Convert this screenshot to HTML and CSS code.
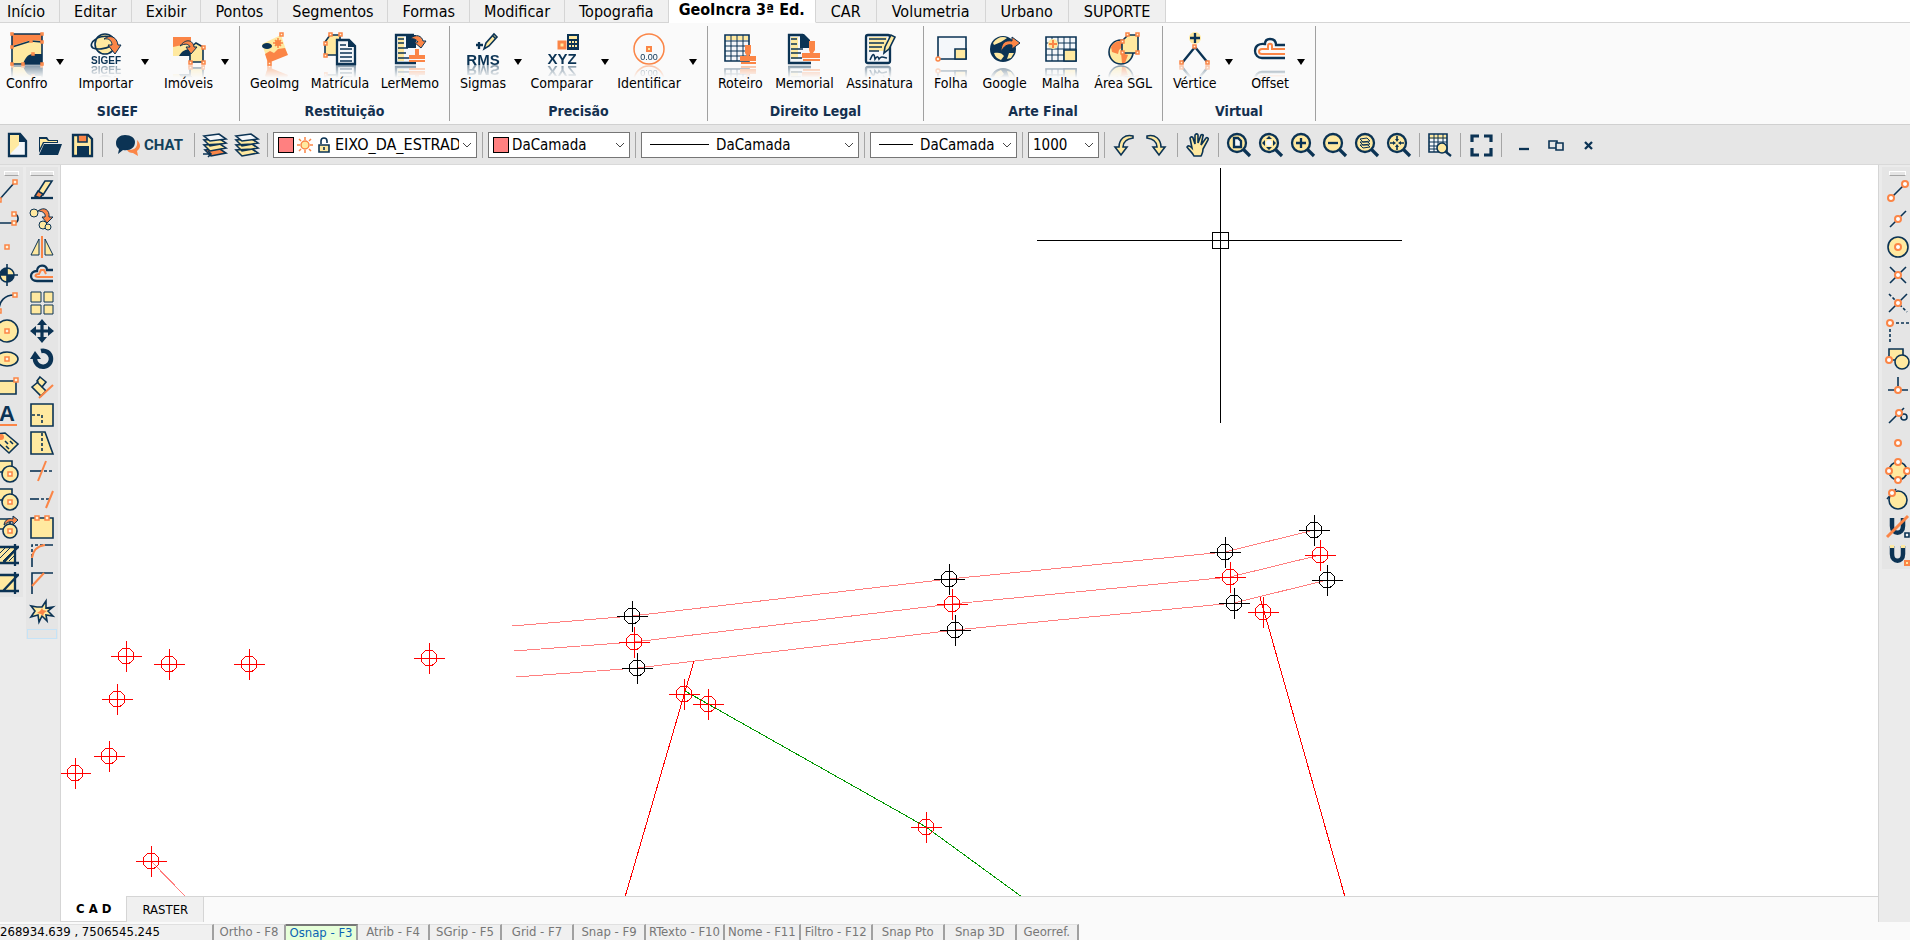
FILE: index.html
```html
<!DOCTYPE html>
<html lang="pt-BR">
  <head>
    <meta charset="UTF-8" />
    <meta name="viewport" content="width=device-width, initial-scale=1.0" />
    <title>GeoIncra 3ª Ed.</title>
    <link rel="stylesheet" href="styles.css">
  </head>
  <body>
    <nav class="tabs">
      <button class="tab">Início</button>
      <button class="tab">Editar</button>
      <button class="tab">Exibir</button>
      <button class="tab">Pontos</button>
      <button class="tab">Segmentos</button>
      <button class="tab">Formas</button>
      <button class="tab">Modificar</button>
      <button class="tab">Topografia</button>
      <button class="tab active">GeoIncra 3ª Ed.</button>
      <button class="tab">CAR</button>
      <button class="tab">Volumetria</button>
      <button class="tab">Urbano</button>
      <button class="tab">SUPORTE</button>
    </nav>

    <section class="ribbon">
      <div class="group">
        <div class="tools">
          <button class="tool drop">
            <svg viewBox="0 0 32 32"><path class="y" d="M1 1h30v30H1z"/><path class="o" d="M1 1h30v7l-11-1L1 13z"/><path class="n" d="M12 31c2-6 5-10 10-10h9v10z"/><path class="ln" d="M1 1h30v30H1zM1 14l19-6 11 1"/><path class="pt" d="M0 0h2v2H0zM30 0h2v2h-2zM0 13h2v2H0zM19 7h2v2h-2zM30 8h2v2h-2zM0 30h2v2H0zM11 30h2v2h-2zM21 20h2v2h-2zM30 30h2v2h-2z"/></svg>
            <span>Confro</span>
          </button>
          <button class="tool drop">
            <svg viewBox="0 0 32 32"><circle class="y ln" cx="15" cy="11" r="10"/><path class="ln" d="M6 6C1 9 0 13 3 15c4 2 12 1 18-2M7 5c5-2 12-2 17 0"/><path class="o ln1" d="M14 6c6-5 13-2 14 6h3l-6 9-7-9h4c0-4-3-7-8-6z"/><text x="16" y="31" class="svgtext" font-size="10" text-anchor="middle">SIGEF</text></svg>
            <span>Importar</span>
          </button>
          <button class="tool drop">
            <svg viewBox="0 0 32 32"><path class="y" d="M0 4h18v19H0z"/><path class="o" d="M0 4h18v6L0 14z"/><path class="n" d="M6 23c3-5 6-7 12-7v7z"/><path class="y ln" d="M18 14l5-4 7 4v15H17V18z"/><path class="o ln1" d="M7 13c6-8 13-6 14 1h3l-6 7-5-7h4c-1-3-5-4-10-1z"/><path class="pt" d="M29 13h3v3h-3zM29 28h3v3h-3zM16 28h3v3h-3z"/></svg>
            <span>Imóveis</span>
          </button>
        </div>
        <h2>SIGEF</h2>
      </div>
      <div class="group">
        <div class="tools">
          <button class="tool">
            <svg viewBox="0 0 32 32"><path class="y" d="M3 11l19-9 6 18L9 29z"/><path class="o" d="M6 21l5-3 4 2 4-4 7-1 3 7-20 8z"/><ellipse class="n" cx="8" cy="13" rx="5" ry="3"/><circle class="o" cx="19" cy="10" r="3"/><path class="lo1" d="M19 5v10M14 10h10M16 7l6 6M22 7l-6 6"/><path class="pt" d="M21 0h3v3h-3zM9 29h3v3H9z"/></svg>
            <span>GeoImg</span>
          </button>
          <button class="tool">
            <svg viewBox="0 0 32 32"><path class="y ln" d="M1 22V9l5-7h10v20z"/><path class="pt" d="M0 9h3v3H0zM5 0h3v3H5zM15 0h3v3h-3zM0 21h3v3H0z"/><path class="w ln2" d="M13 7h12l6 6v18H13z"/><path class="n" d="M24 6l8 8h-8z"/><path class="ln" d="M16 12h6M16 16h12M16 20h12M16 24h12M16 28h12"/></svg>
            <span>Matrícula</span>
          </button>
          <button class="tool">
            <svg viewBox="0 0 32 32"><path class="w ln2" d="M22 30H2V2h18"/><path class="y" d="M4 4h6v24H4z"/><path class="ln" d="M4 6h6M4 10h6M4 15h10M4 20h8M4 25h12"/><path class="n" d="M12 2h10v13H12z"/><path class="o ln1" d="M16 6c6-6 12-3 13 2h3l-5 7-7-6h4c-2-3-5-4-8-3z"/><path class="o" d="M21 16h4v6h6v4H15v-4h6zM15 27h16v2H15z"/></svg>
            <span>LerMemo</span>
          </button>
        </div>
        <h2>Restituição</h2>
      </div>
      <div class="group">
        <div class="tools">
          <button class="tool drop">
            <svg viewBox="0 0 32 32"><path class="y ln" d="M17 16l2-6 8-9 3 3-8 9zM26 3l3 3"/><path class="ln2" d="M9 12h7M12 9v7"/><text x="16" y="32" class="svgtext" font-size="15" text-anchor="middle">RMS</text></svg>
            <span>Sigmas</span>
          </button>
          <button class="tool drop">
            <svg viewBox="0 0 32 32"><path class="pto" d="M13 9h6v6h-6z"/><path class="n" d="M21 1h12v16H21z"/><path class="y" d="M23 3h8v3h-8zM23 8h2v2h-2zM26 8h2v2h-2zM29 8h2v2h-2zM23 12h2v2h-2zM26 12h2v2h-2zM29 12h2v2h-2z"/><text x="16" y="31" class="svgtext" font-size="15" text-anchor="middle">XYZ</text></svg>
            <span>Comparar</span>
          </button>
          <button class="tool drop">
            <svg viewBox="0 0 32 32"><circle class="lo1" cx="16" cy="16" r="15"/><path class="pt2" d="M14 14h4v4h-4z"/><text x="16" y="27" class="value" text-anchor="middle">0.00</text></svg>
            <span>Identificar</span>
          </button>
        </div>
        <h2>Precisão</h2>
      </div>
      <div class="group">
        <div class="tools">
          <button class="tool">
            <svg viewBox="0 0 32 32"><path class="w ln" d="M1 2h24v26H1z"/><path class="y" d="M2 3h22v4H2z"/><path class="lnt" d="M1 8h24M1 13h24M1 18h24M1 23h24M7 2v26M13 2v26M19 2v26"/><path class="o" d="M21 12h6v8l-2 3h7v5H16v-5h7l-2-3zM17 29h15v2H17z"/></svg>
            <span>Roteiro</span>
          </button>
          <button class="tool">
            <svg viewBox="0 0 32 32"><path class="w ln2" d="M23 30H1V2h14"/><path class="y" d="M3 4h7v22H3z"/><path class="n" d="M12 1h4l6 6v8H12z"/><path class="ln" d="M3 6h6M3 11h6M3 16h12M3 20h10M3 25h11"/><path class="o" d="M21 8h6v9l-2 3h7v5H14v-5h8l-1-3zM15 26h17v2H15z"/></svg>
            <span>Memorial</span>
          </button>
          <button class="tool">
            <svg viewBox="0 0 32 32"><rect class="w ln2" x="2" y="2" width="24" height="28" rx="2"/><path class="y" d="M5 4h18v14H5z"/><path class="ln" d="M5 6h17M5 10h15M5 14h13M5 18h10M6 27c3-7 4-7 5-1 2-3 3-3 4 0 2-3 4-2 8-1"/><path class="y ln" d="M20 20l1-6 6-12 4 2-6 12z"/></svg>
            <span>Assinatura</span>
          </button>
        </div>
        <h2>Direito Legal</h2>
      </div>
      <div class="group">
        <div class="tools">
          <button class="tool">
            <svg viewBox="0 0 32 32"><path class="w ln" d="M3 4h28v22H3z"/><path class="y ln" d="M20 16h11v10H20z"/><circle class="pt" cx="3" cy="26" r="2"/></svg>
            <span>Folha</span>
          </button>
          <button class="tool">
            <svg viewBox="0 0 32 32"><circle class="n" cx="14" cy="16" r="13"/><path class="y" d="M4 10c4-6 10-7 14-5l-6 4-7 3zM5 20c5-1 8 0 10 3l-3 4c-3-1-6-3-7-7zM20 20l5 0-3 5-4 1z"/><path class="o ln1" d="M12 19C12 9 17 7 23 8V4l8 6-8 6v-4c-5-1-8 1-11 7z"/></svg>
            <span>Google</span>
          </button>
          <button class="tool">
            <svg viewBox="0 0 32 32"><path class="w ln" d="M1 4h30v24H1z"/><path class="lnt" d="M7 4v24M13 4v24M19 4v24M25 4v24M1 10h30M1 16h30M1 22h30"/><circle class="y" cx="8" cy="11" r="5"/><path class="lo" d="M4 11h8M8 7v8"/><path class="y ln" d="M19 17h12v11H19z"/></svg>
            <span>Malha</span>
          </button>
          <button class="tool">
            <svg viewBox="0 0 32 32"><circle class="y ln" cx="14" cy="19" r="12"/><path class="o" d="M4 14c3-5 6-6 10-6l3 5-5 4-1 4-6-2zM14 20l7 2-3 8h-3z"/><path class="y ln" d="M15 8l6-6h10v18H15z"/><path class="pt" d="M14 7h3v3h-3zM19 0h3v3h-3zM29 0h3v3h-3zM29 18h3v3h-3zM14 18h3v3h-3z"/></svg>
            <span>Área SGL</span>
          </button>
        </div>
        <h2>Arte Final</h2>
      </div>
      <div class="group">
        <div class="tools">
          <button class="tool drop">
            <svg viewBox="0 0 32 32"><circle class="y" cx="16" cy="5" r="6"/><path class="ln2" d="M16 0v10M11 5h10M16 14L3 30M16 14l13 16"/><path class="pt" d="M14 12h3v3h-3zM1 28h3v3H1zM27 28h3v3h-3z"/></svg>
            <span>Vértice</span>
          </button>
          <button class="tool drop">
            <svg viewBox="0 0 32 32"><path class="ln2" d="M31 12h-9c0-4-2-6-6-6s-5 2-5 5C5 10 1 13 1 18c0 4 3 7 7 7h23"/><path class="lo" d="M31 16H18v-3c0-3-4-3-4 0v3H8c-4 0-4 5 0 5h23"/></svg>
            <span>Offset</span>
          </button>
        </div>
        <h2>Virtual</h2>
      </div>
    </section>

    <section class="toolbar">
      <div class="set">
        <button class="icon" aria-label="Novo"><svg viewBox="0 0 24 24"><path class="w ln2" d="M3 1h11l6 7v15H3z"/><path class="y" d="M4 2h9v10l-9 9z"/><path class="n" d="M13 1l8 8h-8z"/></svg></button>
        <button class="icon" aria-label="Abrir"><svg viewBox="0 0 24 24"><path class="n" d="M1 4h8l2 3h9v3H6L1 20zM6 11h18l-4 11H1z"/><path class="y" d="M2 6h6l2 2h9v1H5l-3 6z"/></svg></button>
        <button class="icon" aria-label="Salvar"><svg viewBox="0 0 24 24"><path class="y ln2" d="M3 2h15l4 4v17H3z"/><path class="o ln" d="M8 2h9v7H8z"/><path class="n" d="M7 13h12v9H7z"/></svg></button>
      </div>
      <div class="set">
        <button class="chat"><svg viewBox="0 0 24 24"><path class="o" d="M13 17c7 0 9-4 8-10 4 4 4 8 0 11l1 5-5-3c-3 0-5-1-6-3z"/><path class="n" d="M9 2C4 2 0 5 0 10c0 3 1 4 3 6l-1 5 5-4c7 1 12-2 12-8 0-4-4-7-10-7z"/></svg>CHAT</button>
      </div>
      <div class="set">
        <button class="icon" aria-label="Camada atual"><svg viewBox="0 0 24 24"><path class="o ln" d="M2 17l6 6 15-3-6-4z"/><path class="y ln" d="M1 12l6 6 16-3-6-4zM1 7l6 6 16-3-6-4z"/><path class="w ln" d="M1 3l15-2 7 5-16 2z"/><path class="ln" d="M0 21h8M5 18l3 3-3 3"/></svg></button>
        <button class="icon" aria-label="Camadas"><svg viewBox="0 0 24 24"><path class="y ln" d="M1 17l6 6 16-3-6-4zM1 12l6 6 16-3-6-4zM1 7l6 6 16-3-6-4z"/><path class="w ln" d="M1 3l15-2 7 5-16 2z"/></svg></button>
      </div>
      <div class="set narrow">
        <div class="combo wide">
          <i class="swatch"></i>
          <svg class="mini" viewBox="0 0 16 16"><circle class="y lo1" cx="8" cy="8" r="4"/><path class="lo1" d="M8 0v3M8 13v3M0 8h3M13 8h3M2 2l2 2M12 12l2 2M14 2l-2 2M4 12l-2 2"/></svg>
          <svg class="mini" viewBox="0 0 16 16"><path class="ln" d="M5 7V4c0-4 6-4 6 0v2"/><path class="y ln" d="M3 8h10v7H3z"/><path class="ln" d="M8 10v3"/></svg>
          <select aria-label="Camada"><option>EIXO_DA_ESTRADA</option></select>
          <svg class="chev" viewBox="0 0 10 10"><path d="M1 3l4 4 4-4"/></svg>
        </div>
      </div>
      <div class="set narrow">
        <div class="combo color">
          <i class="swatch"></i>
          <select aria-label="Cor"><option>DaCamada</option></select>
          <svg class="chev" viewBox="0 0 10 10"><path d="M1 3l4 4 4-4"/></svg>
        </div>
      </div>
      <div class="set narrow">
        <div class="combo ltype">
          <i class="line long"></i>
          <select aria-label="Tipo de linha"><option>DaCamada</option></select>
          <svg class="chev" viewBox="0 0 10 10"><path d="M1 3l4 4 4-4"/></svg>
        </div>
      </div>
      <div class="set narrow">
        <div class="combo lweight">
          <i class="line"></i>
          <select aria-label="Espessura"><option>DaCamada</option></select>
          <svg class="chev" viewBox="0 0 10 10"><path d="M1 3l4 4 4-4"/></svg>
        </div>
      </div>
      <div class="set narrow">
        <div class="combo scale">
          <select aria-label="Escala"><option>1000</option></select>
          <svg class="chev" viewBox="0 0 10 10"><path d="M1 3l4 4 4-4"/></svg>
        </div>
      </div>
      <div class="set">
        <button class="icon" aria-label="Desfazer"><svg viewBox="0 0 24 24"><path class="y ln" d="M20 3C12 1 6 6 6 14H2l6 8 6-8h-4c0-5 3-8 10-9z"/></svg></button>
        <button class="icon" aria-label="Refazer"><svg viewBox="0 0 24 24"><path class="y ln" d="M2 3c8-2 14 3 14 11h4l-6 8-6-8h4c0-5-3-8-10-9z"/></svg></button>
      </div>
      <div class="set">
        <button class="icon" aria-label="Mover vista"><svg viewBox="0 0 24 24"><path class="y ln" d="M8 23C6 19 3 17 1 14c1-2 3-1 5 1L4 5c1-2 3-1 3 0l2 6V2c1-2 3-1 3 0v8l3-8c1-1 3 0 2 1l-2 9 5-7c1-1 3 0 2 2l-5 9c0 4-1 5-2 7z"/></svg></button>
      </div>
      <div class="set">
        <button class="icon" aria-label="Zoom página"><svg viewBox="0 0 24 24"><circle class="y ln2" cx="10" cy="10" r="9"/><path class="ln3" d="M16 16l7 7"/><path class="w ln2" d="M7 5h4l3 3v6H7z"/></svg></button>
        <button class="icon" aria-label="Zoom extensão"><svg viewBox="0 0 24 24"><circle class="y ln2" cx="10" cy="10" r="9"/><path class="ln3" d="M16 16l7 7"/><circle class="w" cx="10" cy="10" r="3"/><path class="n" d="M10 3l3 3H7zM10 17l3-3H7zM3 10l3-3v6zM17 10l-3-3v6z"/></svg></button>
        <button class="icon" aria-label="Mais zoom"><svg viewBox="0 0 24 24"><circle class="y ln2" cx="10" cy="10" r="9"/><path class="ln3" d="M16 16l7 7"/><path class="ln2" d="M5 10h10M10 5v10"/></svg></button>
        <button class="icon" aria-label="Menos zoom"><svg viewBox="0 0 24 24"><circle class="y ln2" cx="10" cy="10" r="9"/><path class="ln3" d="M16 16l7 7"/><path class="ln2" d="M5 10h10"/></svg></button>
        <button class="icon" aria-label="Zoom camada"><svg viewBox="0 0 24 24"><circle class="y ln2" cx="10" cy="10" r="9"/><path class="ln3" d="M16 16l7 7"/><path class="y lnt" d="M5 12l3 3 7-1-2-2zM5 9l3 3 7-1-2-2zM5 6l3 3 7-1-3-3z"/></svg></button>
        <button class="icon" aria-label="Zoom centro"><svg viewBox="0 0 24 24"><circle class="y ln2" cx="10" cy="10" r="9"/><path class="ln3" d="M16 16l7 7"/><path class="ln" d="M10 3v4M10 13v4M3 10h4M13 10h4"/><path class="n" d="M10 9L8 6h4zM10 11l-2 3h4zM9 10L6 8v4zM11 10l3-2v4z"/></svg></button>
      </div>
      <div class="set">
        <button class="icon" aria-label="Tabela"><svg viewBox="0 0 24 24"><path class="w ln" d="M1 1h18v18H1z"/><path class="y" d="M2 2h16v4H2z"/><path class="lnt" d="M1 5h18M1 9h18M1 13h18M1 16h18M6 1v18M10 1v18M15 1v18"/><circle class="y ln" cx="14" cy="15" r="5"/><path class="ln2" d="M18 19l5 4"/></svg></button>
      </div>
      <div class="set">
        <button class="icon" aria-label="Tela cheia"><svg viewBox="0 0 24 24"><path class="ln3" d="M3 9V3h7M15 3h7v6M22 15v7h-7M10 22H3v-7"/></svg></button>
      </div>
      <div class="set windows">
        <button class="icon" aria-label="Minimizar"><svg viewBox="0 0 24 24"><path class="ln2" d="M7 16h10"/></svg></button>
        <button class="icon" aria-label="Restaurar"><svg viewBox="0 0 24 24"><path class="ln" d="M12 15H5V8h8v2M12 10h7v7h-7z"/></svg></button>
        <button class="icon" aria-label="Fechar"><svg viewBox="0 0 24 24"><path class="ln2" d="M9 9l7 7M16 9l-7 7"/></svg></button>
      </div>
    </section>

    <main>
      <aside class="side left">
        <div class="column cut">
          <button aria-label="Linha"><svg viewBox="0 0 24 24"><path class="ln" d="M4 21L20 3"/><path class="pt" d="M18 1h4v4h-4zM2 19h4v4H2z"/></svg></button>
          <button aria-label="Polilinha"><svg viewBox="0 0 24 24"><path class="ln" d="M2 16h17c6-1 5-10-1-9"/><path class="pt" d="M17 5h4v4h-4zM17 14h4v4h-4z"/></svg></button>
          <button aria-label="Ponto"><svg viewBox="0 0 24 24"><path class="pt" d="M10 10h4v4h-4z"/></svg></button>
          <button aria-label="Marco"><svg viewBox="0 0 24 24"><circle class="y ln" cx="12" cy="12" r="7"/><path class="n" d="M12 5a7 7 0 0 0-7 7h7zM12 19a7 7 0 0 0 7-7h-7z"/><path class="ln" d="M12 1v22M1 12h22"/></svg></button>
          <button aria-label="Arco"><svg viewBox="0 0 24 24"><path class="ln" d="M4 19C4 10 10 4 19 4"/><path class="pt" d="M18 2h4v4h-4zM2 18h4v4H2z"/></svg></button>
          <button aria-label="Círculo"><svg viewBox="0 0 24 24"><circle class="y ln" cx="12" cy="12" r="11"/><path class="pt" d="M10 10h4v4h-4z"/></svg></button>
          <button aria-label="Elipse"><svg viewBox="0 0 24 24"><ellipse class="y ln" cx="12" cy="12" rx="11" ry="7"/><path class="pt" d="M10 10h4v4h-4z"/></svg></button>
          <button aria-label="Retângulo"><svg viewBox="0 0 24 24"><path class="y ln" d="M2 6h19v13H2z"/><path class="pt" d="M19 3h4v4h-4z"/></svg></button>
          <button aria-label="Texto"><svg viewBox="0 0 24 24"><text x="12" y="18" class="svgtext" font-size="22" text-anchor="middle">A</text><path class="lo" d="M2 22h20"/></svg></button>
          <button aria-label="Etiqueta"><svg viewBox="0 0 24 24"><path class="y ln" d="M2 3l8-1 13 11-9 9L2 11z"/><circle class="o" cx="6" cy="6" r="3"/><path class="ln" d="M10 10l3 3M15 10l3 3M11 15l3 3"/></svg></button>
          <button aria-label="Bloco"><svg viewBox="0 0 24 24"><path class="y ln" d="M1 2h16v11H1z"/><circle class="y ln" cx="15" cy="15" r="8"/><path class="pt" d="M13 13h4v4h-4z"/></svg></button>
          <button aria-label="Inserir bloco"><svg viewBox="0 0 24 24"><path class="y ln" d="M1 2h16v11H1z"/><circle class="y ln" cx="15" cy="15" r="8"/><path class="pt" d="M13 13h4v4h-4z"/></svg></button>
          <button aria-label="Exportar bloco"><svg viewBox="0 0 24 24"><path class="y ln" d="M1 4h14v10H1z"/><circle class="y ln" cx="15" cy="16" r="7"/><path class="o ln1" d="M9 10c1-6 5-7 9-6V1l5 4-5 5V7c-3-1-5 0-9 3z"/><path class="pt" d="M13 14h4v4h-4z"/></svg></button>
          <button aria-label="Hachura"><svg viewBox="0 0 24 24"><path class="y" d="M3 4h17v16H3z"/><path class="ln1" d="M3 12l7-7M3 17L15 5M8 18L19 7M14 18l5-5"/><path class="ln2" d="M2 4h22M2 20h22M20 1v22M23 4L8 20"/></svg></button>
          <button aria-label="Contorno"><svg viewBox="0 0 24 24"><path class="y" d="M2 4h18v16H2z"/><path class="ln2" d="M2 4h22M2 20h22M20 1v22M23 4L8 20"/></svg></button>
        </div>
        <div class="column">
          <button aria-label="Apagar"><svg viewBox="0 0 24 24"><path class="y ln" d="M8 13l7-11h7l-9 14z"/><path class="o ln" d="M5 17l3-5 5 3-3 4z"/><path class="ln2" d="M1 19h22"/></svg></button>
          <button aria-label="Copiar"><svg viewBox="0 0 24 24"><circle class="y ln1" cx="4" cy="6" r="4"/><circle class="y ln1" cx="13" cy="18" r="4"/><circle class="y ln1" cx="18" cy="20" r="3"/><path class="o ln1" d="M8 4c6-5 12-1 11 6h4l-6 6-5-6h3c1-3-2-6-7-6z"/></svg></button>
          <button aria-label="Espelhar"><svg viewBox="0 0 24 24"><path class="y ln1" d="M9 4v16H1zM15 4v16h8z"/><path class="lo" d="M12 1v22"/></svg></button>
          <button aria-label="Paralela"><svg viewBox="0 0 24 24"><path class="ln2" d="M23 7h-6c0-6-10-6-10 1-8 0-8 10 0 10h16"/><path class="lo" d="M23 14H8c-4 0-3-3 1-3l2-4h3l2 4"/></svg></button>
          <button aria-label="Matriz"><svg viewBox="0 0 24 24"><path class="y ln1" d="M1 1h10v10H1zM14 1h9v10h-9zM1 14h10v9H1zM14 14h9v9h-9z"/></svg></button>
          <button aria-label="Mover"><svg viewBox="0 0 24 24"><path class="ln3" d="M12 3v18M3 12h18"/><path class="n" d="M12 0l5 6H7zM12 24l5-6H7zM0 12l6-5v10zM24 12l-6-5v10z"/></svg></button>
          <button aria-label="Girar"><svg viewBox="0 0 24 24"><path class="ln4" d="M11 4a8 8 0 1 1-6 8"/><path class="n" d="M0 12l5-8 6 8z"/></svg></button>
          <button aria-label="Alinhar"><svg viewBox="0 0 24 24"><path class="y ln" d="M10 2l6 5-4 5 4 4-5 5-9-9 6-5-1-1z"/><path class="ln" d="M7 7l5 5"/><path class="lo" d="M9 23L23 10"/></svg></button>
          <button aria-label="Escala"><svg viewBox="0 0 24 24"><path class="y ln" d="M1 1h22v22H1z"/><path class="ln dash" d="M2 12h10v10"/></svg></button>
          <button aria-label="Esticar"><svg viewBox="0 0 24 24"><path class="y ln" d="M1 1h14l8 22H1z"/><path class="ln dash" d="M12 2v20"/></svg></button>
          <button aria-label="Aparar"><svg viewBox="0 0 24 24"><path class="ln" d="M0 12h12"/><path class="ln dash" d="M14 12h10"/><path class="lo" d="M8 22l8-20"/></svg></button>
          <button aria-label="Estender"><svg viewBox="0 0 24 24"><path class="ln" d="M0 12h9"/><path class="ln dash" d="M11 12h8"/><path class="lo" d="M16 21l7-17"/></svg></button>
          <button aria-label="Quebrar"><svg viewBox="0 0 24 24"><path class="y ln" d="M1 3h22v20H1z"/><path class="pt" d="M5 1h4v4H5zM15 1h4v4h-4z"/></svg></button>
          <button aria-label="Concordar"><svg viewBox="0 0 24 24"><path class="ln dash" d="M2 14V2h12"/><path class="ln" d="M2 15v9M15 2h8"/><path class="lo" d="M2 15C3 7 7 3 15 2"/></svg></button>
          <button aria-label="Chanfrar"><svg viewBox="0 0 24 24"><path class="ln" d="M2 23V2h21"/><path class="lo" d="M2 15L14 2"/></svg></button>
          <button aria-label="Explodir"><svg viewBox="0 0 24 24"><path class="y ln" d="M12 8l4-6 0 7 7-1-5 4 5 5-7-1 1 6-5-5-3 6-1-7-7 2 4-6-4-5 6 1z"/><path class="o" d="M12 9l1 2 4 1-3 2-1 3-2-2-4-1 3-2z"/></svg></button>
          <span class="slot"></span>
        </div>
      </aside>

      <div class="workspace">
        <div class="canvas">
          <svg>
            <defs>
              <g id="mark"><circle r="8"/><path d="M-15 0h31M0-15v31"/></g>
            </defs>
            <!-- drawing units are window pixels -->
            <g transform="translate(-61 -165)">
              <g class="road">
                <path d="M512 626L632 616 949 579 1225 552 1314 530"/>
                <path d="M514 651L634 642 952 604 1230 577 1320 555"/>
                <path d="M516 677L637 668 955 630 1234 603 1327 580"/>
                <path d="M151 861L185 896"/>
              </g>
              <g class="border">
                <path d="M694 661L625 897"/>
                <path d="M1260 597L1345 897"/>
              </g>
              <path class="fence" d="M685 691L708 704 926 827 1022 897"/>
              <g class="marks">
                <use href="#mark" x="632" y="616"/>
                <use href="#mark" x="637" y="668"/>
                <use href="#mark" x="949" y="579"/>
                <use href="#mark" x="955" y="630"/>
                <use href="#mark" x="1225" y="552"/>
                <use href="#mark" x="1234" y="603"/>
                <use href="#mark" x="1314" y="530"/>
                <use href="#mark" x="1327" y="580"/>
              </g>
              <g class="marks red">
                <use href="#mark" x="634" y="642"/>
                <use href="#mark" x="952" y="604"/>
                <use href="#mark" x="1230" y="577"/>
                <use href="#mark" x="1320" y="555"/>
                <use href="#mark" x="1263" y="612"/>
                <use href="#mark" x="684" y="694"/>
                <use href="#mark" x="708" y="704"/>
                <use href="#mark" x="926" y="827"/>
                <use href="#mark" x="126" y="656"/>
                <use href="#mark" x="169" y="664"/>
                <use href="#mark" x="249" y="664"/>
                <use href="#mark" x="429" y="658"/>
                <use href="#mark" x="117" y="699"/>
                <use href="#mark" x="109" y="756"/>
                <use href="#mark" x="75" y="773"/>
                <use href="#mark" x="151" y="861"/>
              </g>
              <path class="cursor" d="M1220 168V423M1037 240H1402M1212 232h16v16h-16z"/>
            </g>
          </svg>
        </div>
        <div class="views">
          <button class="view current">C A D</button>
          <button class="view">RASTER</button>
        </div>
      </div>

      <aside class="side right">
        <div class="column">
          <button aria-label="Extremidade"><svg viewBox="0 0 24 24"><path class="ln" d="M5 19L19 5"/><circle class="ring" cx="5" cy="19" r="3"/><circle class="ring" cx="19" cy="5" r="3"/></svg></button>
          <button aria-label="Ponto médio"><svg viewBox="0 0 24 24"><path class="ln" d="M4 20L20 4"/><circle class="ring" cx="12" cy="12" r="3"/></svg></button>
          <button aria-label="Centro"><svg viewBox="0 0 24 24"><circle class="y ln" cx="12" cy="12" r="10"/><circle class="ring" cx="12" cy="12" r="3"/></svg></button>
          <button aria-label="Interseção"><svg viewBox="0 0 24 24"><path class="ln" d="M4 4l16 16M20 4L4 20"/><circle class="ring" cx="12" cy="12" r="3"/></svg></button>
          <button aria-label="Interseção aparente"><svg viewBox="0 0 24 24"><path class="ln" d="M21 3L3 21"/><path class="ln dash" d="M3 3l18 18"/><circle class="ring" cx="12" cy="12" r="3"/></svg></button>
          <button aria-label="Extensão"><svg viewBox="0 0 24 24"><path class="ln dash" d="M4 23V4h20"/><circle class="ring" cx="4" cy="4" r="3"/></svg></button>
          <button aria-label="Inserção"><svg viewBox="0 0 24 24"><path class="y ln" d="M3 2h14v11H3z"/><circle class="y ln" cx="16" cy="15" r="7"/><circle class="ring" cx="3" cy="13" r="3"/></svg></button>
          <button aria-label="Perpendicular"><svg viewBox="0 0 24 24"><path class="ln" d="M2 15h20M12 2v13"/><circle class="ring" cx="12" cy="15" r="3"/></svg></button>
          <button aria-label="Tangente"><svg viewBox="0 0 24 24"><path class="ln" d="M3 20L18 5"/><circle class="ln" cx="18" cy="14" r="3"/><circle class="ring" cx="13" cy="10" r="3"/></svg></button>
          <button aria-label="Nó"><svg viewBox="0 0 24 24"><circle class="ring" cx="12" cy="12" r="3"/></svg></button>
          <button aria-label="Quadrante"><svg viewBox="0 0 24 24"><circle class="y ln" cx="12" cy="12" r="9"/><circle class="ring" cx="12" cy="3" r="3"/><circle class="ring" cx="12" cy="21" r="3"/><circle class="ring" cx="3" cy="12" r="3"/><circle class="ring" cx="21" cy="12" r="3"/></svg></button>
          <button aria-label="Próximo"><svg viewBox="0 0 24 24"><circle class="y ln" cx="12" cy="13" r="9"/><path class="ln" d="M1 12l9-10"/><circle class="ring" cx="6" cy="6" r="3"/></svg></button>
          <button aria-label="Desligar snap"><svg viewBox="0 0 24 24"><path class="ln4" d="M6 3v8c0 9 11 9 11 0V3"/><path class="w ln" d="M19 18h4v4h-4z"/><path class="lo3" d="M1 22L22 1"/></svg></button>
          <button aria-label="Ligar snap"><svg viewBox="0 0 24 24"><path class="ln4" d="M6 3v8c0 9 11 9 11 0V3"/><path class="y" d="M4 2h4v3H4zM15 2h4v3h-4z"/><path class="pt2" d="M19 18h4v4h-4z"/></svg></button>
        </div>
      </aside>
    </main>

    <footer class="status">
      <output class="coords">268934.639 , 7506545.245</output>
      <button>Ortho - F8</button>
      <button class="on">Osnap - F3</button>
      <button>Atrib - F4</button>
      <button>SGrip - F5</button>
      <button>Grid - F7</button>
      <button>Snap - F9</button>
      <button>RTexto - F10</button>
      <button>Nome - F11</button>
      <button>Filtro - F12</button>
      <button>Snap Pto</button>
      <button>Snap 3D</button>
      <button>Georref.</button>
    </footer>
  </body>
</html>
```
FILE: styles.css
```css
* {
  box-sizing: border-box;
}

body {
  margin: 0;
  height: 100vh;
  display: flex;
  flex-direction: column;
  overflow: hidden;
  background: #ebebeb;
  color: #000;
  font-family: "DejaVu Sans Condensed", "Noto Sans", sans-serif;
  font-size: 15px;
}

button {
  margin: 0;
  padding: 0;
  border: 0;
  background: none;
  color: inherit;
  font: inherit;
  white-space: nowrap;
}

svg {
  display: block;
  overflow: visible;
}

/* icon paint */
svg path,
svg circle,
svg ellipse,
svg rect {
  fill: none;
}

svg .y { fill: #ffe9a0; }
svg .o { fill: #fb8546; }
svg .n { fill: #0b3354; }
svg .w { fill: #f4f7fa; }
svg .ln1, svg .ln, svg .ln2, svg .ln3, svg .ln4, svg .lnt { stroke: #0b3354; }
svg .lnt { stroke-width: 1; }
svg .ln1 { stroke-width: 1; }
svg .ln { stroke-width: 1.6; }
svg .ln2 { stroke-width: 2.3; }
svg .ln3 { stroke-width: 3.2; }
svg .ln4 { stroke-width: 4.5; }
svg .lo, svg .lo1, svg .lo3 { stroke: #fb8546; stroke-width: 2; }
svg .lo1 { stroke-width: 1.5; }
svg .lo3 { stroke-width: 3; }
svg .dash { stroke-dasharray: 3 2; }
svg .pt { fill: #fff3dc; stroke: #fb8546; stroke-width: 1.5; }
svg .pt2 { fill: #ffe9a0; stroke: #fb8546; stroke-width: 2; }
svg .pto { fill: #ffe9a0; stroke: #fb8546; stroke-width: 3; }
svg .ring { fill: #fff; stroke: #fb8546; stroke-width: 2; }

.svgtext {
  fill: #0b3354;
  font-family: "Liberation Sans", sans-serif;
  font-weight: bold;
}

.value {
  fill: #0b3354;
  font-family: "Liberation Sans", sans-serif;
  font-size: 9px;
}

/* menu tabs */
.tabs {
  display: flex;
  flex: none;
  height: 23px;
  background: linear-gradient(#fff 22px, #d5d5d5 22px);
  font-size: 16px;
}

.tab {
  padding: 0 14px;
  border-right: 1px solid #d5d5d5;
  border-bottom: 1px solid #d5d5d5;
  background: #f0f0f0;
}

.tab:first-child {
  padding-left: 7px;
}

.tab.active {
  padding: 0 10px 4px;
  border-bottom-color: #fff;
  background: #fff;
  font-weight: bold;
}

.active ~ .tab {
  padding: 0 15px;
}

/* ribbon */
.ribbon {
  display: grid;
  grid-template-columns: 240px 210px 258px 216px 239px 153px;
  flex: none;
  padding: 3px 0;
  background: #fafafa;
  border-bottom: 1px solid #d0d0d0;
}

.group {
  height: 95px;
  padding: 0 10px;
  border-right: 1px solid #a0a0a0;
}

.group:first-child {
  padding-left: 6px;
}

.tools {
  display: flex;
  justify-content: space-between;
  height: 75px;
  padding-top: 7px;
}

.tool {
  display: grid;
  grid-template-columns: auto;
  grid-template-rows: 32px 28px;
  align-items: center;
  justify-items: center;
  font-size: 14px;
}

.tool svg {
  width: 32px;
  height: 32px;
  -webkit-box-reflect: below 0 linear-gradient(transparent 60%, rgba(0, 0, 0, 0.5));
}

.tool span {
  padding-top: 8px;
}

.drop {
  grid-template-columns: auto 16px;
}

.drop::after {
  grid-column: 2;
  grid-row: 1;
  align-self: end;
  justify-self: end;
  content: "";
  border: 4px solid transparent;
  border-top: 6px solid #000;
  border-bottom: 0;
}

.group h2 {
  margin: 0;
  color: #14304f;
  font-size: 14px;
  line-height: 20px;
  text-align: center;
}

/* drawing toolbar */
.toolbar {
  display: flex;
  flex: none;
  align-items: center;
  height: 40px;
  border-bottom: 1px solid #d9d9d9;
  background: #e6e6e6;
}

.set {
  display: flex;
  gap: 8px;
  padding: 0 8px;
  border-right: 1px solid #a5a5a5;
}

.set:first-child {
  padding-left: 6px;
}

.set:last-child {
  padding-left: 10px;
  border: 0;
}

.set.narrow {
  padding: 0 5px;
}

.icon svg,
.chat svg {
  width: 24px;
  height: 24px;
}

.chat {
  display: flex;
  align-items: center;
  gap: 4px;
  padding: 0 3px 0 5px;
  color: #12405a;
  font: bold 15px Roboto, sans-serif;
}

.combo {
  display: flex;
  align-items: center;
  gap: 3px;
  height: 26px;
  padding: 0 4px;
  border: 1px solid #767676;
  background: #fff;
}

.wide {
  width: 204px;
  font-size: 16px;
}

.color { width: 142px; }
.ltype { width: 218px; }
.lweight { width: 147px; }
.scale { width: 71px; }

.combo select {
  flex: 1;
  min-width: 0;
  padding: 0;
  border: 0;
  appearance: none;
  background: none;
  color: #000;
  font: inherit;
}

.swatch {
  flex: none;
  width: 16px;
  height: 16px;
  border: 1px solid #000;
  background: #ff8080;
}

.mini {
  flex: none;
  width: 16px;
  height: 16px;
}

.line {
  flex: none;
  width: 34px;
  height: 1px;
  margin: 0 4px;
  background: #000;
}

.line.long {
  width: 59px;
}

.chev {
  flex: none;
  width: 10px;
  height: 10px;
}

.chev path {
  stroke: #444;
}

/* side bars and canvas */
main {
  display: flex;
  flex: 1;
  min-height: 0;
}

.side {
  display: flex;
  flex: none;
  align-items: flex-start;
  padding-top: 2px;
}

.left {
  gap: 3px;
  padding-right: 2px;
}

.right {
  padding-left: 3px;
}

.column {
  display: flex;
  flex-direction: column;
  width: 32px;
  overflow: hidden;
  background: #e5e5e5;
}

.column::before {
  content: "";
  height: 3px;
  margin: 4px 4px 1px;
  border: 1px solid #fff;
  border-bottom-color: #a5a5a5;
}

.column button {
  display: flex;
  justify-content: center;
  align-items: center;
  height: 28px;
}

.column svg {
  flex: none;
  width: 24px;
  height: 24px;
}

.cut {
  width: 23px;
}

.cut button {
  justify-content: flex-end;
  padding-right: 4px;
}

.right .column {
  width: 28px;
  padding-left: 3px;
}

.slot {
  height: 10px;
  margin: 4px 1px 0;
  border: 1px solid #c5e3f7;
}

.workspace {
  display: flex;
  flex: 1;
  flex-direction: column;
  min-width: 0;
  border-right: 1px solid #d5d5d5;
  border-left: 1px solid #d5d5d5;
  background: #fafafa;
}

.canvas {
  flex: 1;
  min-height: 0;
  overflow: hidden;
  background: #fff;
}

.canvas svg {
  width: 100%;
  height: 100%;
  shape-rendering: crispEdges;
}

.road { stroke: #ff7f7f; }
.border { stroke: #f00; }
.fence { stroke: #009600; }
.marks { stroke: #000; }
.red { stroke: #f00; }
.cursor { stroke: #000; }

.views {
  display: flex;
  flex: none;
  height: 26px;
  border-top: 1px solid #d5d5d5;
}

.view {
  padding: 0 15px;
  border-right: 1px solid #d5d5d5;
  background: #f0f0f0;
  font-size: 13px;
}

.view.current {
  margin-top: -1px;
  border-bottom: 1px solid #d5d5d5;
  background: #fff;
  font-weight: bold;
}

/* status bar */
.status {
  display: flex;
  flex: none;
  height: 18px;
  padding-top: 2px;
  background: #fafafa;
  color: #777;
  font-size: 13px;
}

.status button,
.coords {
  min-width: 72px;
  padding: 0 3px 2px;
  border-top: 1px solid #e0e0e0;
  border-right: 2px solid #a0a0a0;
  background: #f0f0f0;
  line-height: 13px;
}

.status button:last-child {
  min-width: 62px;
}

.coords {
  width: 214px;
  padding-left: 0;
  color: #000;
  white-space: nowrap;
}

.status .on {
  border-top: 2px solid #777;
  background: #e6ffd9;
  color: #0a64b4;
}
```
